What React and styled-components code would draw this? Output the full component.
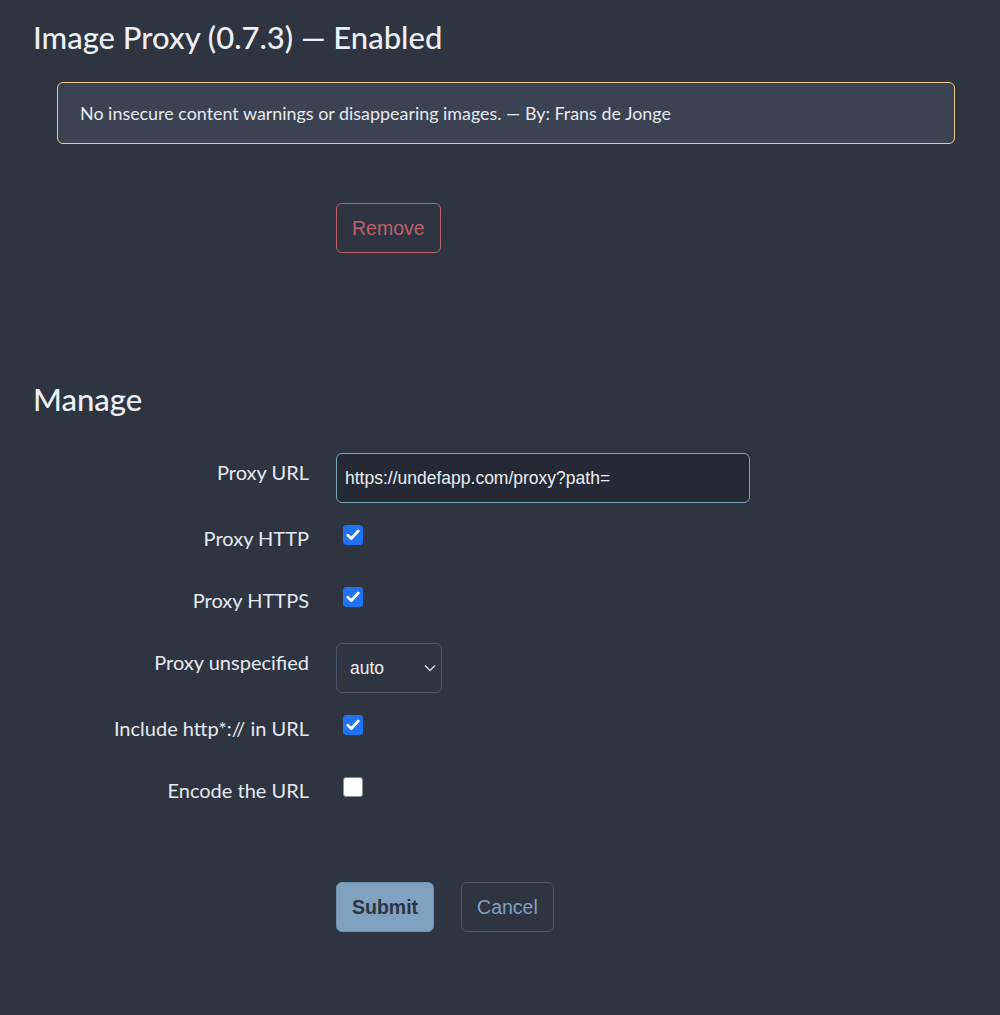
import React from 'react';
import styled, { createGlobalStyle } from 'styled-components';

const GlobalStyle = createGlobalStyle`
  body {
    margin: 0;
    background: #2e3440;
    color: #eceff4;
    font-family: Lato, "Noto Sans", sans-serif;
  }
`

const Page = styled.main`
  padding: 19px 45px 60px 33px;
  min-height: 1015px;
  box-sizing: border-box;
`

const Heading = styled.h2`
  margin: 0;
  font-size: 31px;
  font-weight: 500;
  line-height: 1.2;
  color: #eceff4;
`

const Notice = styled.div`
  margin: 26px 0 0 24px;
  padding: 17px 22px;
  background: #3b4252;
  border: 1px solid #ebcb8b;
  border-radius: 6px;
  font-size: 17.9px;
  line-height: 26px;
  color: #e5e9f0;
`

const Grid = styled.div`
  display: grid;
  grid-template-columns: 276px 1fr;
  column-gap: 27px;
  row-gap: 16px;
  align-items: start;
`

const Label = styled.label`
  text-align: right;
  font-size: 20px;
  line-height: 1.2;
  padding-top: 7px;
  color: #e5e9f0;
`

const Button = styled.button`
  height: 50px;
  padding: 0 15px;
  border-radius: 6px;
  font-family: "Liberation Sans", Arial, sans-serif;
  font-size: 19.5px;
  font-weight: ${({ primary }) => primary ? 700 : 400};
  background: ${({ primary }) => primary ? '#81a1c1' : 'transparent'};
  color: ${({ tone }) => tone};
  border: 1px solid ${({ edge }) => edge};
  cursor: pointer;
`

const RemoveRow = styled(Grid)`
  margin-top: 59px;
`

const Section = styled(Heading)`
  margin-top: 128px;
`

const Form = styled(Grid)`
  margin-top: 35px;
`

const TextInput = styled.input`
  width: 414px;
  height: 50px;
  box-sizing: border-box;
  padding: 0 8px;
  background: #242933;
  border: 1px solid #77a6b4;
  border-radius: 6px;
  color: #eceff4;
  font-family: "Liberation Sans", Arial, sans-serif;
  font-size: 17.5px;
  outline: none;
`

const SelectWrap = styled.div`
  position: relative;
  width: 106px;
`

const Select = styled.select`
  appearance: none;
  width: 106px;
  height: 50px;
  padding: 0 13px;
  background: #2e3440;
  border: 1px solid #4c566a;
  border-radius: 6px;
  color: #eceff4;
  font-family: "Liberation Sans", Arial, sans-serif;
  font-size: 17.5px;
`

const Chevron = styled.svg`
  position: absolute;
  right: 6px;
  top: 21px;
  pointer-events: none;
`

const Check = styled.span`
  display: flex;
  align-items: center;
  justify-content: center;
  width: 20px;
  height: 20px;
  margin: 6px 0 20px 7px;
  box-sizing: border-box;
  border-radius: 3px;
  background: ${({ checked }) => checked ? '#1f72f2' : '#ffffff'};
  border: 1px solid ${({ checked }) => checked ? '#1f72f2' : '#8a8f99'};
`

const Actions = styled.div`
  grid-column: 2;
  display: flex;
  gap: 27px;
  margin-top: 49px;
`

const Checkbox = ({ checked }) => (
  <Check checked={checked} role="checkbox" aria-checked={checked}>
    {checked && (
      <svg width="14" height="12" viewBox="0 0 14 12">
        <path d="M1.8 6.3 L5.3 9.6 L12.2 2" fill="none" stroke="#fff" strokeWidth="2.8" strokeLinecap="round" strokeLinejoin="round" />
      </svg>
    )}
  </Check>
)

const fields = [
  { label: 'Proxy HTTP', checked: true },
  { label: 'Proxy HTTPS', checked: true },
]

const lower = [
  { label: 'Include http*:// in URL', checked: true },
  { label: 'Encode the URL', checked: false },
]

export default function App() {
  return (
    <Page>
      <GlobalStyle />
      <Heading>Image Proxy (0.7.3) — Enabled</Heading>
      <Notice>No insecure content warnings or disappearing images. — By: Frans de Jonge</Notice>

      <RemoveRow>
        <span />
        <div>
          <Button tone="#bf616a" edge="#bf616a">Remove</Button>
        </div>
      </RemoveRow>

      <Section>Manage</Section>
      <Form>
        <Label>Proxy URL</Label>
        <div>
          <TextInput defaultValue="https://undefapp.com/proxy?path=" />
        </div>

        {fields.map(f => (
          <React.Fragment key={f.label}>
            <Label>{f.label}</Label>
            <Checkbox checked={f.checked} />
          </React.Fragment>
        ))}

        <Label>Proxy unspecified</Label>
        <SelectWrap>
          <Select defaultValue="auto">
            <option value="auto">auto</option>
            <option value="http">http</option>
            <option value="https">https</option>
          </Select>
          <Chevron width="12" height="8" viewBox="0 0 12 8">
            <path d="M1 1.5 L6 6.5 L11 1.5" fill="none" stroke="#d8dee9" strokeWidth="1.3" />
          </Chevron>
        </SelectWrap>

        {lower.map(f => (
          <React.Fragment key={f.label}>
            <Label>{f.label}</Label>
            <Checkbox checked={f.checked} />
          </React.Fragment>
        ))}

        <Actions>
          <Button primary tone="#2e3440" edge="#6f8fb0">Submit</Button>
          <Button tone="#81a1c1" edge="#4c566a">Cancel</Button>
        </Actions>
      </Form>
    </Page>
  )
}
